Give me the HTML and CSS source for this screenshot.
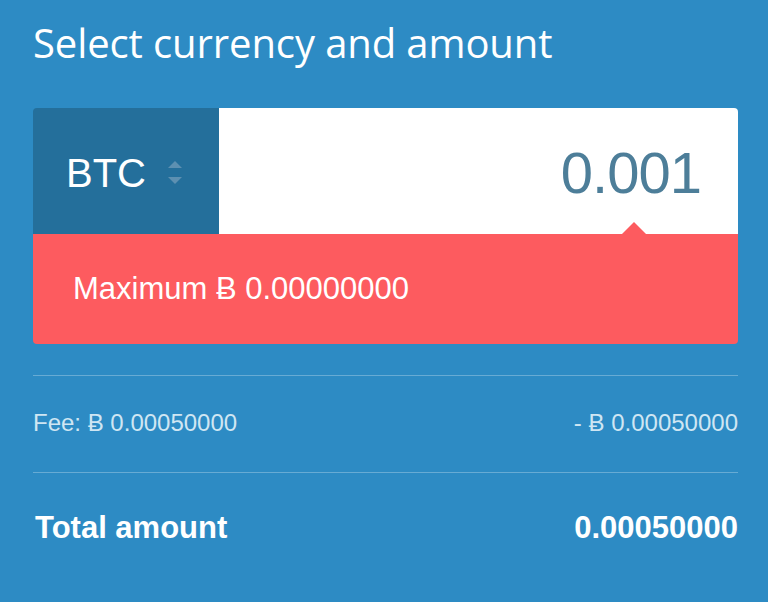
FILE: index.html
```html
<!DOCTYPE html>
<html>
<head>
<meta charset="utf-8">
<link rel="stylesheet" href="styles.css">
</head>
<body>
<div class="panel">
  <h1 class="title">Select currency and amount</h1>
  <div class="card">
    <div class="top-row">
      <div class="currency">
        <span class="code">BTC</span>
        <svg class="arrows" width="14" height="23" viewBox="0 0 14 23">
          <path d="M7 0 L14 7 L0 7 Z"/>
          <path d="M0 16 L14 16 L7 23 Z"/>
        </svg>
      </div>
      <div class="amount">0.001</div>
    </div>
    <div class="error">
      <span class="notch"></span>
      Maximum Ƀ 0.00000000
    </div>
  </div>
  <div class="sep"></div>
  <div class="fee-row">
    <span>Fee: Ƀ 0.00050000</span>
    <span>- Ƀ 0.00050000</span>
  </div>
  <div class="sep"></div>
  <div class="total-row">
    <span>Total amount</span>
    <span>0.00050000</span>
  </div>
</div>
</body>
</html>
```
FILE: styles.css
```css
html, body {
  margin: 0;
  padding: 0;
  background: #2d8bc4;
  height: 100%;
}
.panel {
  padding: 23px 30px 0 33px;
  font-family: "Liberation Sans", Arial, sans-serif;
  color: #fff;
}
.title {
  margin: 0;
  font-family: "Open Sans", sans-serif;
  font-weight: 400;
  font-size: 40px;
  line-height: 40px;
  color: #fff;
  letter-spacing: -0.1px;
}
.card {
  margin-top: 45px;
  border-radius: 4px;
  overflow: hidden;
}
.top-row {
  display: flex;
  height: 126px;
}
.currency {
  width: 186px;
  flex: none;
  background: #246f9b;
  display: flex;
  align-items: center;
  padding-left: 33px;
  padding-top: 4px;
  box-sizing: border-box;
}
.code {
  font-size: 40px;
  line-height: 40px;
  color: #fff;
}
.arrows {
  margin-left: 22px;
  margin-top: -2px;
  fill: #5d90b1;
}
.amount {
  flex: 1;
  background: #fff;
  display: flex;
  align-items: center;
  justify-content: flex-end;
  padding-right: 37px;
  padding-top: 4px;
  font-size: 58px;
  line-height: 58px;
  letter-spacing: -1px;
  color: #4d7e99;
}
.error {
  position: relative;
  background: #fd5b5f;
  padding: 40px 0 40px 40px;
  font-size: 31px;
  line-height: 30px;
  color: #fff;
}
.notch {
  position: absolute;
  top: -12px;
  right: 92px;
  width: 0;
  height: 0;
  border-left: 12px solid transparent;
  border-right: 12px solid transparent;
  border-bottom: 12px solid #fd5b5f;
}
.sep {
  height: 1px;
  background: rgba(255, 255, 255, 0.28);
}
.card + .sep {
  margin-top: 31px;
}
.fee-row {
  display: flex;
  justify-content: space-between;
  padding: 35px 0 37px;
  font-size: 24px;
  line-height: 24px;
  color: #cfe6f3;
}
.total-row {
  display: flex;
  justify-content: space-between;
  padding: 40px 0 0 2px;
  font-size: 31px;
  line-height: 30px;
  font-weight: 700;
  color: #fff;
}
```
